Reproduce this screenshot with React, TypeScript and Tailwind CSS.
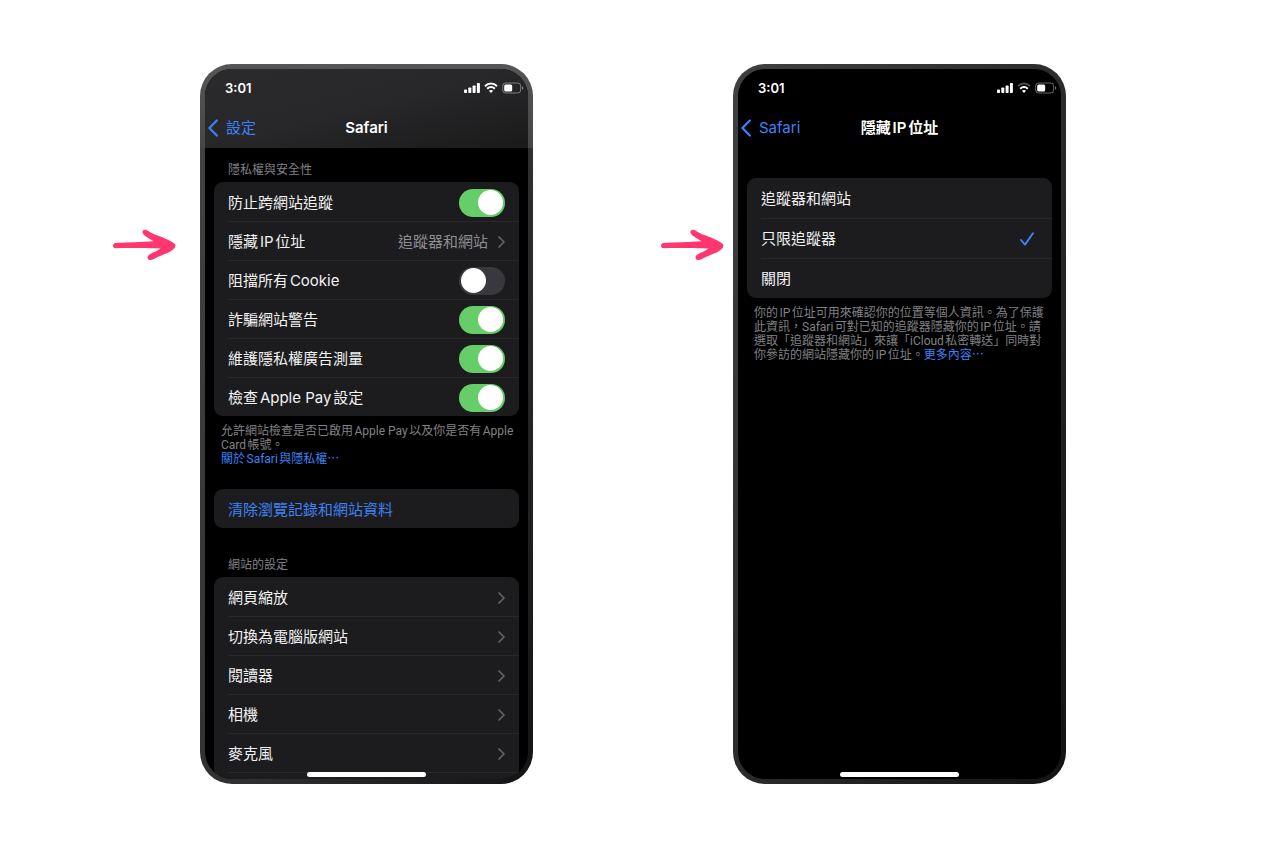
import type { ReactNode } from "react";

const font =
  "font-['Inter','Noto_Sans_CJK_TC',sans-serif] [text-autospace:normal]";

function Arrow() {
  return (
    <svg className="mt-[165px] h-8 w-[63px] shrink-0" viewBox="0 0 63 32" aria-hidden="true">
      <path
        fill="#ff3670"
        d="M2.500 14C14 13.200 28 13 40.500 12.200C37.500 10.200 35.500 9 33 7.400C30.500 6 28.800 3.600 29.600 2.200C30.800.400 33 .600 34.500 1.600C36.500 3.200 38.500 4 41 5.200C45 6.700 48.500 7.600 52 9.400C56 11.200 59.500 12.800 61.500 14.800C62.800 16.200 62.700 18 61.200 19.400C58.500 21.800 56 23.500 53 24.600C47 26.800 43.500 28.600 40.500 30.300C38 31.700 34.800 31.300 34.500 28.700C34.600 26.200 37 25 39.500 23.800C42.500 22.400 45 21.400 47.500 19.400C32 19.200 16 19 2.500 19.200C-.8 18.800-.8 14.500 2.500 14Z"
      />
    </svg>
  );
}

function StatusBar({ dimWifi = false }: { dimWifi?: boolean }) {
  return (
    <div className="flex h-[39px] items-center justify-between pb-0.5 pl-5 pr-1">
      <span className="text-[13px] font-semibold leading-4">3:01</span>
      <svg className="h-3 w-[60px]" viewBox="0 0 60 12" fill="#fff" aria-hidden="true">
        <rect x="0" y="7.500" width="3" height="3.500" rx=".8" />
        <rect x="4.300" y="5.500" width="3" height="5.500" rx=".8" />
        <rect x="8.600" y="3.500" width="3" height="7.500" rx=".8" />
        <rect x="12.900" y="1" width="3" height="10" rx=".8" />
        <g fill="none" stroke="#fff" strokeWidth="2">
          <path opacity={dimWifi ? 0.3 : 1} d="M21 4.300C24.400.7 29.600.7 33 4.300" />
          <path d="M23.200 6.700C25.500 4.400 28.500 4.400 30.800 6.700" />
        </g>
        <path d="M24.900 8.700C26 7.600 28 7.600 29.100 8.700L27 10.900Z" />
        <rect x="38.700" y="1" width="18" height="10" rx="3" fill="none" stroke="#fff" strokeOpacity=".4" />
        <rect x="40.200" y="2.500" width="8" height="7" rx="1.500" />
        <path fillOpacity=".45" d="M58 4.300Q59.300 5 59.300 6T58 7.700Z" />
      </svg>
    </div>
  );
}

function NavBar({ back, title }: { back: string; title: string }) {
  return (
    <div className="grid h-10 grid-cols-[1fr_auto_1fr] items-center pl-[3px] pr-[3px]">
      <a href="#back" className="flex items-center gap-2 text-[15px] leading-5 text-[#3e82f7]">
        <svg className="h-[18px] w-[10px]" viewBox="0 0 10 18" fill="none" stroke="currentColor" strokeWidth="2.200" strokeLinecap="round" strokeLinejoin="round" aria-hidden="true">
          <path d="M8.800 1.500 1.400 9l7.400 7.500" />
        </svg>
        {back}
      </a>
      <h1 className="text-[15px] font-semibold leading-5">{title}</h1>
    </div>
  );
}

function Phone({ label, frame, children }: { label: string; frame: string; children: ReactNode }) {
  return (
    <section
      aria-label={label}
      className={`relative aspect-[333/720] w-[333px] shrink-0 overflow-hidden rounded-[32px] p-[5px] ${frame}`}
    >
      <div className="h-full overflow-hidden rounded-[27px] bg-black text-white">{children}</div>
      <div className="absolute inset-x-0 bottom-[7px] mx-auto h-[5px] w-[119px] rounded-full bg-white" />
    </section>
  );
}

function Card({ children }: { children: ReactNode }) {
  return <div className="mx-[9px] overflow-hidden rounded-[9px] bg-[#1c1c1e] pl-[14px]">{children}</div>;
}

const rowBase =
  "flex w-full items-center justify-between border-t border-[#29292b] pt-px pr-[14px] text-left text-[15px] leading-5 text-[#f2f2f2] first:border-t-0 first:pt-0.5";

function ToggleRow({ label, on = false }: { label: string; on?: boolean }) {
  return (
    <label className={`${rowBase} h-[39px]`}>
      {label}
      <input
        type="checkbox"
        role="switch"
        defaultChecked={on}
        className="flex h-7 w-[46px] appearance-none items-center rounded-full bg-[#39393d] px-0.5 before:size-[25px] before:rounded-full before:bg-white before:content-[''] checked:justify-end checked:bg-[#65ce68]"
      />
    </label>
  );
}

function LinkRow({ label, value }: { label: string; value?: string }) {
  return (
    <button type="button" className={`${rowBase} h-[39px]`}>
      <span>{label}</span>
      <span className="flex items-center gap-[10px] text-[#8e8e93]">
        {value}
        <svg className="h-3 w-[7px]" viewBox="0 0 7 12" fill="none" stroke="#636367" strokeWidth="1.700" strokeLinecap="round" strokeLinejoin="round" aria-hidden="true">
          <path d="m1 1 5 5-5 5" />
        </svg>
      </span>
    </button>
  );
}

function ChoiceRow({ label, checked = false }: { label: string; checked?: boolean }) {
  return (
    <label className={`${rowBase} h-10`}>
      {label}
      <input type="radio" name="hide-ip" defaultChecked={checked} className="peer sr-only" />
      <svg className="mr-1 hidden h-[14px] w-[14px] peer-checked:block" viewBox="0 0 14 14" fill="none" stroke="#3e82f7" strokeWidth="1.900" strokeLinecap="round" strokeLinejoin="round" aria-hidden="true">
        <path d="M1 8 5 12.600 13 1.200" />
      </svg>
    </label>
  );
}

function SectionTitle({ children }: { children: ReactNode }) {
  return <h2 className="px-[23px] pb-1 text-xs leading-4 text-[#808085]">{children}</h2>;
}

const note =
  "whitespace-nowrap pl-4 pt-2 font-['Roboto','Noto_Sans_CJK_TC',sans-serif] text-xs leading-[14px] text-[#808085]";

export default function App() {
  return (
    <main className={`flex min-h-screen items-start gap-32 bg-white py-16 pl-[113px] ${font}`}>
      <div className="flex gap-6">
        <Arrow />
        <Phone
          label="Safari"
          frame="bg-[linear-gradient(to_bottom,#565656,#464646_11.6%,transparent_11.6%),linear-gradient(to_bottom_right,#444,#303030_55%,#141414)]"
        >
          <header className="bg-linear-to-br from-[#2b2b2d] via-[#272729] to-[#1a1a1b]">
            <StatusBar />
            <NavBar back="設定" title="Safari" />
          </header>
          <div className="pt-[14px]">
            <SectionTitle>隱私權與安全性</SectionTitle>
            <Card>
              <ToggleRow label="防止跨網站追蹤" on />
              <LinkRow label="隱藏IP位址" value="追蹤器和網站" />
              <ToggleRow label="阻擋所有Cookie" />
              <ToggleRow label="詐騙網站警告" on />
              <ToggleRow label="維護隱私權廣告測量" on />
              <ToggleRow label="檢查Apple Pay設定" on />
            </Card>
            <p className={note}>
              允許網站檢查是否已啟用Apple Pay以及你是否有Apple
              <br />
              Card帳號。
              <br />
              <a href="#privacy" className="text-[#3e82f7]">關於Safari與隱私權⋯</a>
            </p>
          </div>
          <div className="pt-[23px]">
            <Card>
              <button type="button" className="flex h-[39px] w-full items-center pt-0.5 text-[15px] leading-5 text-[#3e82f7]">
                清除瀏覽記錄和網站資料
              </button>
            </Card>
          </div>
          <div className="pt-[29px]">
            <SectionTitle>網站的設定</SectionTitle>
            <Card>
              <LinkRow label="網頁縮放" />
              <LinkRow label="切換為電腦版網站" />
              <LinkRow label="閱讀器" />
              <LinkRow label="相機" />
              <LinkRow label="麥克風" />
              <div className={`${rowBase} h-[39px]`} />
            </Card>
          </div>
        </Phone>
      </div>
      <div className="flex gap-[9px]">
        <Arrow />
        <Phone label="隱藏IP位址" frame="bg-linear-to-br from-[#404040] via-[#2c2c2c] to-[#141414]">
          <header>
            <StatusBar dimWifi />
            <NavBar back="Safari" title="隱藏IP位址" />
          </header>
          <div className="pt-[30px]">
            <Card>
              <ChoiceRow label="追蹤器和網站" />
              <ChoiceRow label="只限追蹤器" checked />
              <ChoiceRow label="關閉" />
            </Card>
            <p className={note}>
              你的IP位址可用來確認你的位置等個人資訊。為了保護
              <br />
              此資訊，Safari可對已知的追蹤器隱藏你的IP位址。請
              <br />
              選取「追蹤器和網站」來讓「iCloud私密轉送」同時對
              <br />
              你參訪的網站隱藏你的IP位址。
              <a href="#more" className="text-[#3e82f7]">更多內容⋯</a>
            </p>
          </div>
        </Phone>
      </div>
    </main>
  );
}
